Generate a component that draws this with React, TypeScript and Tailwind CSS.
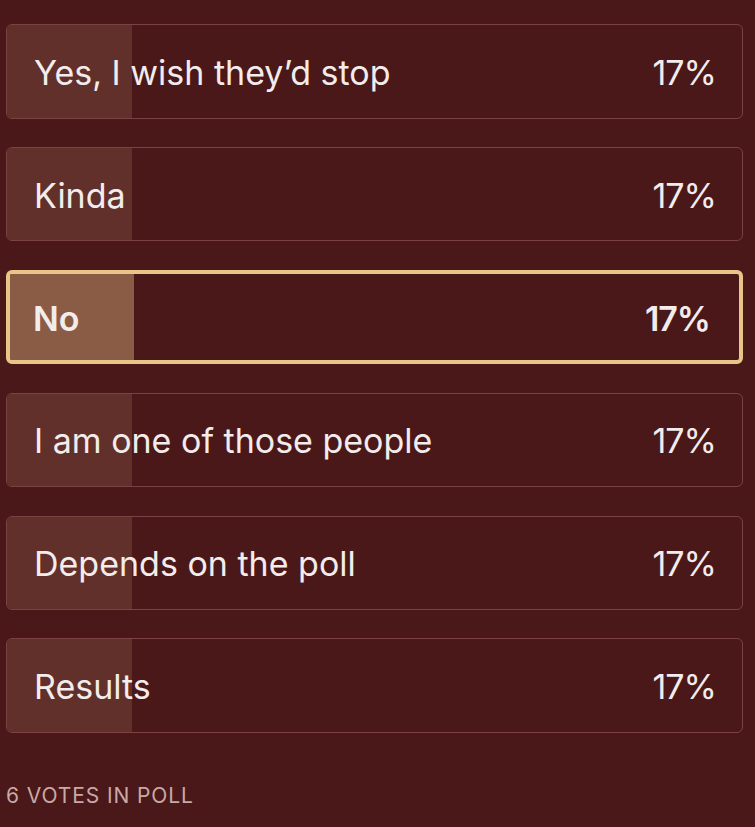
import React from "react";

const options = [
  { label: "Yes, I wish they’d stop", pct: 17, selected: false },
  { label: "Kinda", pct: 17, selected: false },
  { label: "No", pct: 17, selected: true },
  { label: "I am one of those people", pct: 17, selected: false },
  { label: "Depends on the poll", pct: 17, selected: false },
  { label: "Results", pct: 17, selected: false },
];

export default function App() {
  return (
    <div
      className="w-[755px] h-[827px] bg-[#4a1818] pt-[24px] pl-[6px] pr-[12px] overflow-hidden"
      style={{ fontFamily: "Inter, 'Open Sans', sans-serif" }}
    >
      <div className="flex flex-col gap-[28.4px]">
        {options.map((o) => (
          <div
            key={o.label}
            className={
              o.selected
                ? "relative h-[94.5px] rounded-[6px] border-[4px] border-[#e8c68a] overflow-hidden"
                : "relative h-[94.5px] rounded-[6px] border border-[#7a4242] overflow-hidden"
            }
          >
            <div
              className={
                o.selected
                  ? "absolute left-0 top-0 bottom-0 bg-[#8a5c45]"
                  : "absolute left-0 top-0 bottom-0 bg-[#62302a]"
              }
              style={{ width: `${o.pct}%` }}
            />
            <div
              className={
                o.selected
                  ? "relative flex h-full items-center justify-between pl-[23px] pr-[29px] pt-[2px] text-[34px] font-semibold text-[#f3ecec]"
                  : "relative flex h-full items-center justify-between pl-[27px] pr-[26px] pt-[2px] text-[34px] text-[#f3ecec]"
              }
            >
              <span>{o.label}</span>
              <span className="tracking-[-1px]">{o.pct}%</span>
            </div>
          </div>
        ))}
      </div>
      <div className="mt-[47px] text-[21px] tracking-[0.9px] text-[#c9a9a6]">
        6 VOTES IN POLL
      </div>
    </div>
  );
}
